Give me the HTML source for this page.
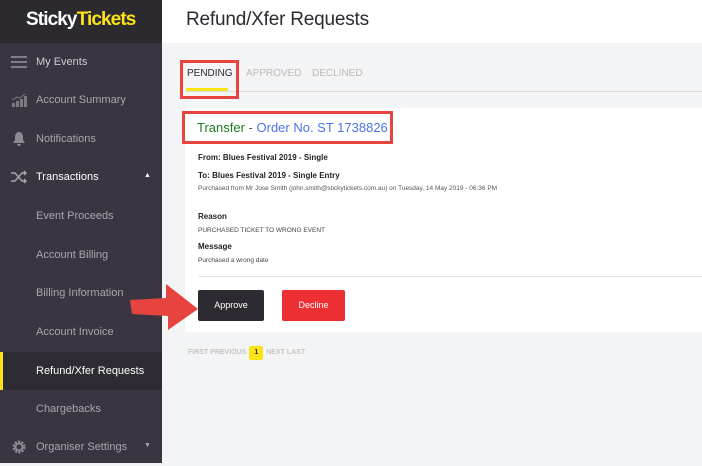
<!DOCTYPE html>
<html><head><style>
*{margin:0;padding:0;box-sizing:border-box}
body{width:702px;height:463px;overflow:hidden;font-family:"Liberation Sans",sans-serif;background:#f3f4f6;position:relative}
.sb{position:absolute;left:0;top:0;width:162px;height:463px;background:#3a3540}
.logo{height:43px;background:#2c292f;color:#fff;font-weight:bold;font-size:19px;letter-spacing:-0.9px;padding:9px 0 0 26px}
.logo span{color:#fbe31a}
.it{position:absolute;left:0;width:162px;height:38px;font-size:11px;color:#aaa6ae;line-height:38px}
.it .t{position:absolute;left:36px}
.ic{position:absolute;left:11px;top:12px;width:16px;height:14px}
.hdr{position:absolute;left:162px;top:0;right:0;height:43px;background:#fff}
.hdr h1{font-size:19px;font-weight:normal;color:#2c2a30;position:absolute;left:24px;top:9px;letter-spacing:-0.2px}
.tabs{position:absolute;left:185px;top:68px;font-size:10px;color:#bbb}
.tabline{position:absolute;left:185px;top:91px;width:517px;height:1px;background:#ddd}
.card{position:absolute;left:185px;top:108px;width:517px;height:224px;background:#fff}
.red{position:absolute;border:3px solid #e8443f}
.s{position:absolute;font-size:8px;color:#333}
.b{font-weight:bold;color:#222}
</style></head><body>
<div class="sb">
<div class="logo">Sticky<span>Tickets</span></div>
<div class="it" style="top:43px;color:#d0ccd4"><svg class="ic" viewBox="0 0 16 14"><path d="M0 2h16M0 7h16M0 12h16" stroke="#8d8992" stroke-width="1.8"/></svg><span class="t">My Events</span></div>
<div class="it" style="top:81px"><svg class="ic" viewBox="0 0 16 14"><path d="M1 14V10h3v4zM5 14V8h3v6zM9 14V6h3v8zM13 14V3h3v11z" fill="#7d7a82"/><path d="M1 7L6 4l3 1 5-4" stroke="#7d7a82" fill="none"/></svg><span class="t">Account Summary</span></div>
<div class="it" style="top:120px"><svg class="ic" viewBox="0 0 16 14"><path d="M8 0c-3 0-4 3-4 5v3l-2 3h12l-2-3V5c0-2-1-5-4-5zM6 12h4c0 1-1 2-2 2s-2-1-2-2z" fill="#8d8992"/></svg><span class="t">Notifications</span></div>
<div class="it" style="top:158px;color:#fff"><svg class="ic" viewBox="0 0 16 14"><path d="M0 3h4l7 8h4M0 11h4l7-8h4M13 1l2 2-2 2M13 9l2 2-2 2" stroke="#a9a6ad" fill="none" stroke-width="1.4"/></svg><span class="t">Transactions</span><span style="position:absolute;left:144px;top:-1px;font-size:7px">▲</span></div>
<div class="it" style="top:197px"><span class="t">Event Proceeds</span></div>
<div class="it" style="top:236px"><span class="t">Account Billing</span></div>
<div class="it" style="top:274px"><span class="t">Billing Information</span></div>
<div class="it" style="top:313px"><span class="t">Account Invoice</span></div>
<div class="it" style="top:352px;background:#2f2b33;color:#fff"><div style="position:absolute;left:0;top:0;width:3px;height:38px;background:#fbe31a"></div><span class="t">Refund/Xfer Requests</span></div>
<div class="it" style="top:390px"><span class="t">Chargebacks</span></div>
<div class="it" style="top:428px"><svg class="ic" viewBox="0 0 16 14"><circle cx="8" cy="7" r="5" fill="none" stroke="#8d8992" stroke-width="3" stroke-dasharray="2 1.2"/><circle cx="8" cy="7" r="3.5" fill="none" stroke="#8d8992" stroke-width="2"/></svg><span class="t">Organiser Settings</span><span style="position:absolute;left:144px;top:-1px;font-size:7px">▼</span></div>
</div>
<div class="hdr"><h1>Refund/Xfer Requests</h1></div>
<div class="tabs"><span style="color:#2c2a30;position:absolute;left:2px;white-space:nowrap">PENDING</span><span style="position:absolute;left:61px;white-space:nowrap">APPROVED</span><span style="position:absolute;left:127px;white-space:nowrap">DECLINED</span></div>
<div class="tabline"></div>
<div style="position:absolute;left:186px;top:88px;width:42px;height:3px;background:#fbe31a"></div>
<div class="red" style="left:180px;top:60px;width:59px;height:39px"></div>
<div class="card">
<div class="s" style="left:12px;top:12px;font-size:13px;color:#1f7d1f;white-space:nowrap">Transfer <span style="color:#555">-</span> <span style="color:#4a73e8">Order No. ST 1738826</span></div>
<div class="s b" style="left:13px;top:45px">From: Blues Festival 2019 - Single</div>
<div class="s b" style="left:13px;top:63px">To: Blues Festival 2019 - Single Entry</div>
<div class="s" style="left:13px;top:77px;font-size:6.5px;color:#555;white-space:nowrap">Purchased from Mr Jose Smith (john.smith@stickytickets.com.au) on Tuesday, 14 May 2019 - 06:36 PM</div>
<div class="s b" style="left:13px;top:104px">Reason</div>
<div class="s" style="left:13px;top:119px;font-size:6.5px;color:#444">PURCHASED TICKET TO WRONG EVENT</div>
<div class="s b" style="left:13px;top:134px">Message</div>
<div class="s" style="left:13px;top:149px;font-size:6.5px;color:#444">Purchased a wrong date</div>
<div style="position:absolute;left:13px;top:168px;width:504px;height:1px;background:#e2e2e2"></div>
<div style="position:absolute;left:13px;top:182px;width:66px;height:31px;background:#2e2a31;border-radius:2px;color:#fff;font-size:9px;text-align:center;line-height:31px">Approve</div>
<div style="position:absolute;left:97px;top:182px;width:63px;height:31px;background:#ec2f33;border-radius:2px;color:#fff;font-size:9px;text-align:center;line-height:31px">Decline</div>
</div>
<div class="red" style="left:182px;top:111px;width:211px;height:33px"></div>
<svg style="position:absolute;left:130px;top:283px" width="70" height="48" viewBox="0 0 70 48"><path d="M0 17l36-2V1l32 25-30 21V33L2 31z" fill="#e8443f"/></svg>
<div style="position:absolute;left:188px;top:346px;font-size:7px;font-weight:bold;color:#c4c4c4;white-space:nowrap">FIRST PREVIOUS <span style="display:inline-block;width:14px;height:14px;background:#fbe31a;color:#333;text-align:center;line-height:14px;border-radius:2px;margin:0 1px">1</span> NEXT LAST</div>
</body></html>
